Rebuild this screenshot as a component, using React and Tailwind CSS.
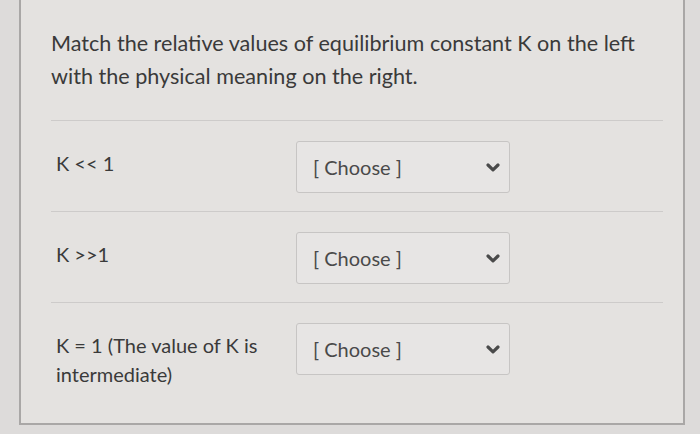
import { useState } from "react";

const rows = [
  { id: "k-small", label: "K << 1" },
  { id: "k-large", label: "K >>1" },
  { id: "k-one", label: "K = 1 (The value of K is intermediate)" },
];

function Chevron() {
  return (
    <svg width="14" height="9" viewBox="0 0 14 9" className="shrink-0">
      <polyline
        points="2,2 7,6.8 12,2"
        fill="none"
        stroke="#4a4a4a"
        strokeWidth="3.2"
        strokeLinecap="round"
        strokeLinejoin="round"
      />
    </svg>
  );
}

function ChooseSelect({ value }) {
  return (
    <div className="flex h-[52px] w-[214px] items-center justify-between rounded-[3px] border border-[#c7c5c4] bg-[#e7e5e4] pl-[16px] pr-[9px]">
      <span className="text-[20px] text-[#4a4a4a]">{value || "[ Choose ]"}</span>
      <Chevron />
    </div>
  );
}

export default function App() {
  const [answers] = useState({});

  return (
    <div
      className="h-[434px] w-[700px] overflow-hidden bg-[#dddbda] pl-[19px] pr-[15px]"
      style={{ fontFamily: "Lato, 'Open Sans', sans-serif" }}
    >
      {/* Question card, top edge scrolled out of view */}
      <div className="h-[425px] border-x-2 border-b-2 border-[#a9a7a6] bg-[#e4e2e0] pl-[30px] pr-[20px] pt-[27px]">
        <p className="text-[21.6px] leading-[33px] text-[#3a3a3a]">
          Match the relative values of equilibrium constant K on the left
          <br />
          with the physical meaning on the right.
        </p>

        <div className="mt-[27px] border-t border-[#cdcbca]">
          {rows.map((row) => (
            <div
              key={row.id}
              className="flex items-start border-b border-[#cdcbca] pb-[18px] pt-[20px] last:border-b-0"
            >
              <div className="mt-[8px] w-[245px] pl-[5px] pr-[20px] text-[20px] leading-[29px] text-[#3a3a3a]">
                {row.label}
              </div>
              <ChooseSelect value={answers[row.id]} />
            </div>
          ))}
        </div>
      </div>
    </div>
  );
}
